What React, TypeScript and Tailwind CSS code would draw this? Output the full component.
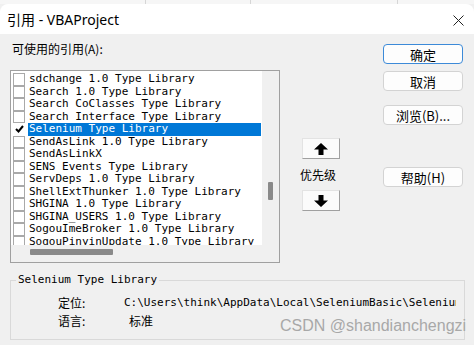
import React from "react";

const items = [
  "sdchange 1.0 Type Library",
  "Search 1.0 Type Library",
  "Search CoClasses Type Library",
  "Search Interface Type Library",
  "Selenium Type Library",
  "SendAsLink 1.0 Type Library",
  "SendAsLinkX",
  "SENS Events Type Library",
  "ServDeps 1.0 Type Library",
  "ShellExtThunker 1.0 Type Library",
  "SHGINA 1.0 Type Library",
  "SHGINA_USERS 1.0 Type Library",
  "SogouImeBroker 1.0 Type Library",
  "SogouPinyinUpdate 1.0 Type Library",
];

const cjk = "font-['Noto_Sans_CJK_SC','Noto_Sans',sans-serif]";
const mono = "font-['DejaVu_Sans_Mono','Liberation_Mono','Noto_Sans_CJK_SC',monospace]";

function Btn({ children, primary }: { children: React.ReactNode; primary?: boolean }) {
  return (
    <div
      className={`h-[20px] w-[80px] rounded-[4px] bg-[#fdfdfd] flex items-center justify-center text-[13px] leading-none text-black ${cjk} ${
        primary ? "border border-[#3c8ad8]" : "border border-[#d3d3d3]"
      }`}
    >
      {children}
    </div>
  );
}

function ArrowBtn({ up }: { up?: boolean }) {
  return (
    <div className="h-[21px] w-[38px] bg-[#fbfbfb] border border-[#e3e3e3] border-r-[#a0a0a0] border-b-[#a0a0a0] flex items-center justify-center">
      <svg width="14" height="12" viewBox="0 0 14 12">
        <polygon
          points={up ? "7,0 14,6.5 9.5,6.5 9.5,12 4.5,12 4.5,6.5 0,6.5" : "7,12 14,5.5 9.5,5.5 9.5,0 4.5,0 4.5,5.5 0,5.5"}
          fill="#000"
        />
      </svg>
    </div>
  );
}

export default function App() {
  return (
    <div className="w-[474px] h-[345px] bg-[#f0f0f0] overflow-hidden relative">
      {/* window behind */}
      <div className="h-[4px] bg-[#f6f6f6] relative">
        <div className="absolute left-[145px] top-0 h-[4px] w-px bg-[#d6d6d6]" />
        <div className="absolute left-[250px] top-0 h-[4px] w-px bg-[#d6d6d6]" />
        <div className="absolute left-[397px] top-0 h-[4px] w-px bg-[#d6d6d6]" />
      </div>
      {/* title bar */}
      <div className="h-[30px] bg-white rounded-t-[8px] flex items-center justify-between pl-[7px] pr-[10px]">
        <span className={`text-[14px] text-black font-['Noto_Sans','Noto_Sans_CJK_SC',sans-serif]`}>引用 - VBAProject</span>
        <svg width="11" height="11" viewBox="0 0 11 11" className="mt-[2px]">
          <path d="M0.5 0.5 L10.5 10.5 M10.5 0.5 L0.5 10.5" stroke="#222" strokeWidth="1" />
        </svg>
      </div>
      {/* body */}
      <div className="flex pl-[10px] pt-[7px]">
        <div className="flex flex-col w-[270px]">
          <div className={`h-[29px] pl-[2px] text-[12px] leading-[16px] text-black ${cjk}`}>可使用的引用(A):</div>
          <div className="h-[193px] border border-[#a0a0a0] bg-[#f0f0f0] flex flex-col">
            <div className="flex h-[174px]">
              <div className="w-[251px] bg-white overflow-hidden pt-[2px]">
                {items.map((t, i) => {
                  const sel = i === 4;
                  return (
                    <div key={t} className="flex h-[12.5px] items-center">
                      <div
                        className={`ml-[2px] w-[12px] h-[12.5px] bg-white flex items-center justify-center ${
                          sel ? "" : "border border-[#a9a9a9]"
                        }`}
                      >
                        {sel && (
                          <svg width="9" height="8" viewBox="0 0 9 8">
                            <path d="M1 4 L3.5 6.5 L8 1" stroke="#000" strokeWidth="2" fill="none" />
                          </svg>
                        )}
                      </div>
                      <div
                        className={`ml-[3px] h-[12.5px] pl-[1px] text-[11px] leading-[12.5px] whitespace-nowrap ${mono} ${
                          sel ? "bg-[#0078d7] text-white w-[233px]" : "text-black"
                        }`}
                      >
                        {t}
                      </div>
                    </div>
                  );
                })}
              </div>
              <div className="w-[17px] bg-[#f0f0f0]">
                <div className="ml-[6px] mt-[111px] w-[5px] h-[18px] bg-[#8a8a8a] rounded-[1px]" />
              </div>
            </div>
            <div className="h-[17px] bg-[#f0f0f0]">
              <div className="ml-[19px] mt-[4px] w-[83px] h-[6px] bg-[#8a8a8a] rounded-[1px]" />
            </div>
          </div>
        </div>
        {/* priority */}
        <div className="ml-[22px] w-[38px] flex flex-col pt-[97px]">
          <ArrowBtn up />
          <div className={`h-[31px] flex items-center -ml-[2px] text-[12px] text-black whitespace-nowrap ${cjk}`}>优先级</div>
          <ArrowBtn />
        </div>
        {/* right buttons */}
        <div className="ml-[43px] flex flex-col pt-[3px]">
          <Btn primary>确定</Btn>
          <div className="h-[7px]" />
          <Btn>取消</Btn>
          <div className="h-[14px]" />
          <Btn>浏览(B)...</Btn>
          <div className="h-[42px]" />
          <Btn>帮助(H)</Btn>
        </div>
      </div>
      {/* group box */}
      <fieldset className="mx-[10px] mt-[11px] h-[66px] border border-[#d9d9d9] pr-[8px]">
        <legend className={`ml-[5px] px-[2px] text-[11px] leading-[12px] text-black ${mono}`}>Selenium Type Library</legend>
        <div className="pt-[8px] pl-[47px] overflow-hidden">
          <div className="flex h-[18px] items-center">
            <div className={`w-[66px] text-[12px] text-black ${cjk}`}>定位:</div>
            <div className={`text-[11px] text-black whitespace-nowrap overflow-hidden w-[332px] ${mono}`}>
              C:\Users\think\AppData\Local\SeleniumBasic\Selenium.tlb
            </div>
          </div>
          <div className="flex h-[18px] items-center">
            <div className={`w-[66px] text-[12px] text-black ${cjk}`}>语言:</div>
            <div className={`pl-[5px] text-[12px] text-black ${cjk}`}>标准</div>
          </div>
        </div>
      </fieldset>
      <div className="absolute left-[280px] top-[316px] text-[16px] leading-[20px] text-[#a8a8a8] font-['Liberation_Sans',Arial,sans-serif] whitespace-nowrap">
        CSDN @shandianchengzi
      </div>
    </div>
  );
}
